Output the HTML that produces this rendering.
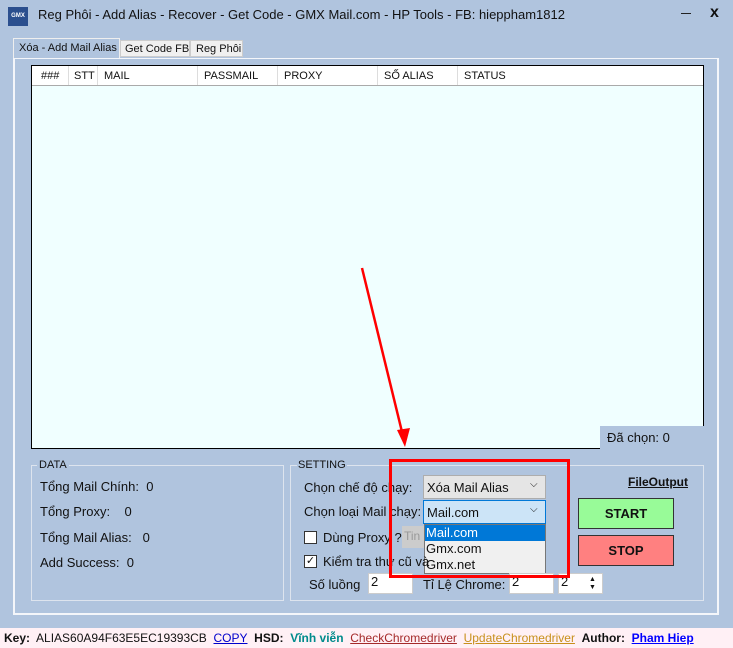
<!DOCTYPE html>
<html><head><meta charset="utf-8"><style>
*{margin:0;padding:0;box-sizing:border-box}
body{width:733px;height:648px;background:#b0c4de;font-family:"Liberation Sans",sans-serif;font-size:12px;color:#111;position:relative;overflow:hidden}
.a{position:absolute;white-space:nowrap}
.lbl{font-size:13px}
</style></head><body>
<div class="a" style="left:8px;top:7px;width:20px;height:19px;background:#2b4f8e;color:#fff;font-size:6px;font-weight:bold;line-height:19px;text-align:center">GMX</div>
<div class="a" style="left:38px;top:7px;font-size:13px">Reg Phôi - Add Alias - Recover - Get Code - GMX Mail.com - HP Tools - FB: hieppham1812</div>
<div class="a" style="left:681px;top:13px;width:10px;height:1px;background:#222"></div>
<div class="a" style="left:710px;top:4px;font-size:16px;font-weight:bold">x</div>

<!-- tabs -->
<div class="a" style="left:13px;top:38px;width:107px;height:21px;background:#b0c4de;border:1px solid #eee;border-bottom:none;font-size:11px;padding:3px 0 0 5px">Xóa - Add Mail Alias</div>
<div class="a" style="left:120px;top:40px;width:70px;height:17px;background:#f0f0f0;border:1px solid #ccc;font-size:11px;padding:2px 0 0 4px">Get Code FB</div>
<div class="a" style="left:190px;top:40px;width:53px;height:17px;background:#f0f0f0;border:1px solid #ccc;font-size:11px;padding:2px 0 0 5px">Reg Phôi</div>
<div class="a" style="left:13px;top:58px;width:706px;height:557px;border:2px solid #f4f6fa;border-top:1px solid #f4f6fa"></div>

<!-- list -->
<div class="a" style="left:31px;top:65px;width:673px;height:384px;background:#f0ffff;border:1px solid #000"></div>
<div class="a" style="left:32px;top:66px;width:671px;height:20px;background:#fff;border-bottom:1px solid #aaa;font-size:11px">
<span class="a" style="left:9px;top:4px">###</span><span class="a" style="left:36px;top:0;height:19px;border-left:1px solid #ddd"></span>
<span class="a" style="left:42px;top:4px">STT</span><span class="a" style="left:65px;top:0;height:19px;border-left:1px solid #ddd"></span>
<span class="a" style="left:72px;top:4px">MAIL</span><span class="a" style="left:165px;top:0;height:19px;border-left:1px solid #ddd"></span>
<span class="a" style="left:172px;top:4px">PASSMAIL</span><span class="a" style="left:245px;top:0;height:19px;border-left:1px solid #ddd"></span>
<span class="a" style="left:252px;top:4px">PROXY</span><span class="a" style="left:345px;top:0;height:19px;border-left:1px solid #ddd"></span>
<span class="a" style="left:352px;top:4px">SỐ ALIAS</span><span class="a" style="left:425px;top:0;height:19px;border-left:1px solid #ddd"></span>
<span class="a" style="left:432px;top:4px">STATUS</span>
</div>
<div class="a" style="left:600px;top:426px;width:104px;height:23px;background:#b0c4de;border-top:1px solid #b0c4de"></div>
<div class="a lbl" style="left:607px;top:430px">Đã chọn: 0</div>

<!-- DATA -->
<div class="a" style="left:31px;top:465px;width:253px;height:136px;border:1px solid #dde4ee"></div>
<div class="a" style="left:37px;top:459px;background:#b0c4de;padding:0 2px;font-size:11px">DATA</div>
<div class="a lbl" style="left:40px;top:479px">Tổng Mail Chính:&nbsp; 0</div>
<div class="a lbl" style="left:40px;top:504px">Tổng Proxy:&nbsp;&nbsp;&nbsp; 0</div>
<div class="a lbl" style="left:40px;top:530px">Tổng Mail Alias:&nbsp;&nbsp; 0</div>
<div class="a lbl" style="left:40px;top:555px">Add Success:&nbsp; 0</div>

<!-- SETTING -->
<div class="a" style="left:290px;top:465px;width:414px;height:136px;border:1px solid #dde4ee"></div>
<div class="a" style="left:297px;top:459px;background:#b0c4de;padding:0 1px;font-size:11px">SETTING</div>
<div class="a lbl" style="left:304px;top:480px">Chọn chế độ chạy:</div>
<div class="a lbl" style="left:304px;top:504px">Chọn loại Mail chạy:</div>
<div class="a" style="left:423px;top:475px;width:123px;height:24px;background:#e5e5e5;border:1px solid #adadad;font-size:13px;padding:4px 0 0 3px">Xóa Mail Alias<span class="a" style="left:106px;top:3px;font-size:10px">⌵</span></div>
<div class="a" style="left:423px;top:500px;width:123px;height:24px;background:#cce4f7;border:1px solid #0078d7;font-size:13px;padding:4px 0 0 3px">Mail.com<span class="a" style="left:106px;top:3px;font-size:10px">⌵</span></div>
<div class="a" style="left:424px;top:524px;width:122px;height:50px;background:#f0f0f0;border:1px solid #777;font-size:13px;line-height:16px">
<div style="background:#0078d7;color:#fff;padding-left:1px">Mail.com</div><div style="padding-left:1px">Gmx.com</div><div style="padding-left:1px">Gmx.net</div></div>
<div class="a" style="left:304px;top:531px;width:13px;height:13px;background:#fff;border:1px solid #333"></div>
<div class="a lbl" style="left:323px;top:530px">Dùng Proxy ?</div>
<div class="a" style="left:402px;top:526px;width:22px;height:22px;background:#ccc;color:#999;font-size:12px;padding:3px 0 0 2px">Tin</div>
<div class="a" style="left:304px;top:555px;width:13px;height:13px;background:#fff;border:1px solid #333;font-size:11px;line-height:11px;text-align:center">✓</div>
<div class="a lbl" style="left:323px;top:554px">Kiểm tra thư cũ và</div>
<div class="a lbl" style="left:309px;top:577px">Số luồng</div>
<div class="a" style="left:368px;top:573px;width:45px;height:21px;background:#fff;border:1px solid #ccc;font-size:13px;padding:0 2px">2</div>
<div class="a lbl" style="left:423px;top:577px">Tỉ Lệ Chrome:</div>
<div class="a" style="left:509px;top:573px;width:45px;height:21px;background:#fff;border:1px solid #ccc;font-size:13px;padding:0 2px">2</div>
<div class="a" style="left:558px;top:573px;width:45px;height:21px;background:#fff;border:1px solid #ccc;font-size:13px;padding:0 2px">2<span class="a" style="left:30px;top:2px;font-size:7px;line-height:8px">▲<br>▼</span></div>
<div class="a" style="left:628px;top:475px;font-size:12px;font-weight:bold;text-decoration:underline">FileOutput</div>
<div class="a" style="left:578px;top:498px;width:96px;height:31px;background:#98fb98;border:1px solid #333;font-weight:bold;font-size:13px;text-align:center;line-height:29px">START</div>
<div class="a" style="left:578px;top:535px;width:96px;height:31px;background:#ff8080;border:1px solid #333;font-weight:bold;font-size:13px;text-align:center;line-height:29px">STOP</div>

<!-- annotation -->
<div class="a" style="left:389px;top:459px;width:181px;height:119px;border:3px solid #f00"></div>
<svg class="a" style="left:0;top:0" width="733" height="648"><line x1="362" y1="268" x2="403" y2="436" stroke="#f00" stroke-width="2.5"/><polygon points="405,447 397,430 410,428" fill="#f00"/></svg>

<!-- footer -->
<div class="a" style="left:0;top:628px;width:733px;height:20px;background:#fff0f5;font-size:12px;padding:3px 0 0 4px">
<b>Key:</b>&nbsp; ALIAS60A94F63E5EC19393CB&nbsp; <span style="color:#00c;text-decoration:underline">COPY</span>&nbsp; <b>HSD:</b>&nbsp; <b style="color:#008b8b">Vĩnh viễn</b>&nbsp; <span style="color:#a52a2a;text-decoration:underline">CheckChromedriver</span>&nbsp; <span style="color:#c8901c;text-decoration:underline">UpdateChromedriver</span>&nbsp; <b>Author:</b>&nbsp; <b style="color:#00f;text-decoration:underline">Pham Hiep</b></div>
</body></html>
